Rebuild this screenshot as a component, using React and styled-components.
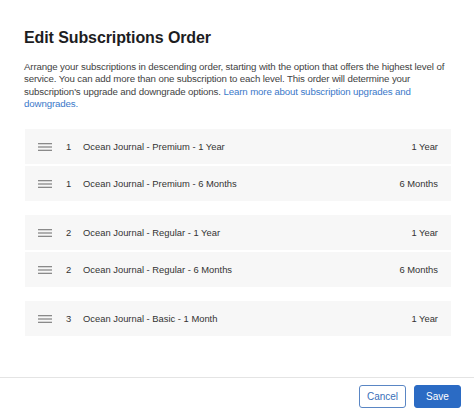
import React from 'react'
import styled, { createGlobalStyle } from 'styled-components'

const Global = createGlobalStyle`
  html, body { margin: 0; padding: 0; background: #fff; }
  body { font-family: "Liberation Sans", Arial, sans-serif; color: #1d1d1f; }
`

const groups = [
  [
    { level: 1, name: 'Ocean Journal - Premium - 1 Year', duration: '1 Year' },
    { level: 1, name: 'Ocean Journal - Premium - 6 Months', duration: '6 Months' },
  ],
  [
    { level: 2, name: 'Ocean Journal - Regular - 1 Year', duration: '1 Year' },
    { level: 2, name: 'Ocean Journal - Regular - 6 Months', duration: '6 Months' },
  ],
  [
    { level: 3, name: 'Ocean Journal - Basic - 1 Month', duration: '1 Year' },
  ],
]

function DragHandle() {
  return (
    <svg width="14" height="8" viewBox="0 0 14 8">
      <rect x="0" y="0" width="14" height="1.3" fill="#8a8a8a" />
      <rect x="0" y="3.35" width="14" height="1.3" fill="#8a8a8a" />
      <rect x="0" y="6.7" width="14" height="1.3" fill="#8a8a8a" />
    </svg>
  )
}

export default function App() {
  return (
    <Modal>
      <Global />
      <Body>
        <Title>Edit Subscriptions Order</Title>
        <Description>
          Arrange your subscriptions in descending order, starting with the option that offers the highest level of<br />
          service. You can add more than one subscription to each level. This order will determine your<br />
          subscription's upgrade and downgrade options. <Link>Learn more about subscription upgrades and<br />
          downgrades.</Link>
        </Description>
        <Groups>
          {groups.map((g, i) => (
            <Group key={i}>
              {g.map((r) => (
                <Row key={r.name}>
                  <Handle><DragHandle /></Handle>
                  <Level>{r.level}</Level>
                  <Name>{r.name}</Name>
                  <Duration>{r.duration}</Duration>
                </Row>
              ))}
            </Group>
          ))}
        </Groups>
      </Body>
      <Footer>
        <Button>Cancel</Button>
        <Button primary>Save</Button>
      </Footer>
    </Modal>
  )
}

const Modal = styled.div`
  width: 474px;
  height: 414px;
  display: flex;
  flex-direction: column;
  background: #fff;
`
const Body = styled.div`
  flex: 1;
  padding: 27px 24px 0 24px;
`
const Title = styled.h1`
  margin: 0;
  font-size: 16px;
  font-weight: 700;
  color: #1d1d1f;
  line-height: 22px;
  letter-spacing: -0.1px;
`
const Description = styled.p`
  margin: 12px 0 0 0;
  font-size: 9.7px;
  line-height: 12.3px;
  letter-spacing: -0.13px;
  color: #3f3f3f;
  white-space: nowrap;
`
const Link = styled.span`
  color: #3a78c9;
`
const Groups = styled.div`
  margin-top: 19px;
  display: flex;
  flex-direction: column;
  gap: 14px;
`
const Group = styled.div`
  display: flex;
  flex-direction: column;
  gap: 2px;
`
const Row = styled.div`
  height: 35px;
  margin: 0 0 0 1px;
  width: 426px;
  display: flex;
  align-items: center;
  background: #f7f7f7;
  font-size: 9.4px;
  color: #333;
`
const Handle = styled.div`
  width: 14px;
  margin-left: 13px;
  display: flex;
  align-items: center;
`
const Level = styled.span`
  margin-left: 14px;
  width: 17px;
`
const Name = styled.span`
  flex: 1;
`
const Duration = styled.span`
  margin-right: 13px;
`
const Footer = styled.div`
  height: 29px;
  border-top: 1px solid #e4e4e4;
  display: flex;
  justify-content: flex-end;
  align-items: flex-start;
  padding: 7px 13px 0 0;
  gap: 8px;
`
const Button = styled.button`
  width: 47px;
  height: 23px;
  border-radius: 3px;
  font-family: inherit;
  font-size: 10px;
  font-weight: 500;
  padding: 0;
  cursor: pointer;
  border: 1px solid ${(p) => (p.primary ? '#2b6bc4' : '#5a86c4')};
  background: ${(p) => (p.primary ? '#2b6bc4' : '#fff')};
  color: ${(p) => (p.primary ? '#fff' : '#3a6fb8')};
`
